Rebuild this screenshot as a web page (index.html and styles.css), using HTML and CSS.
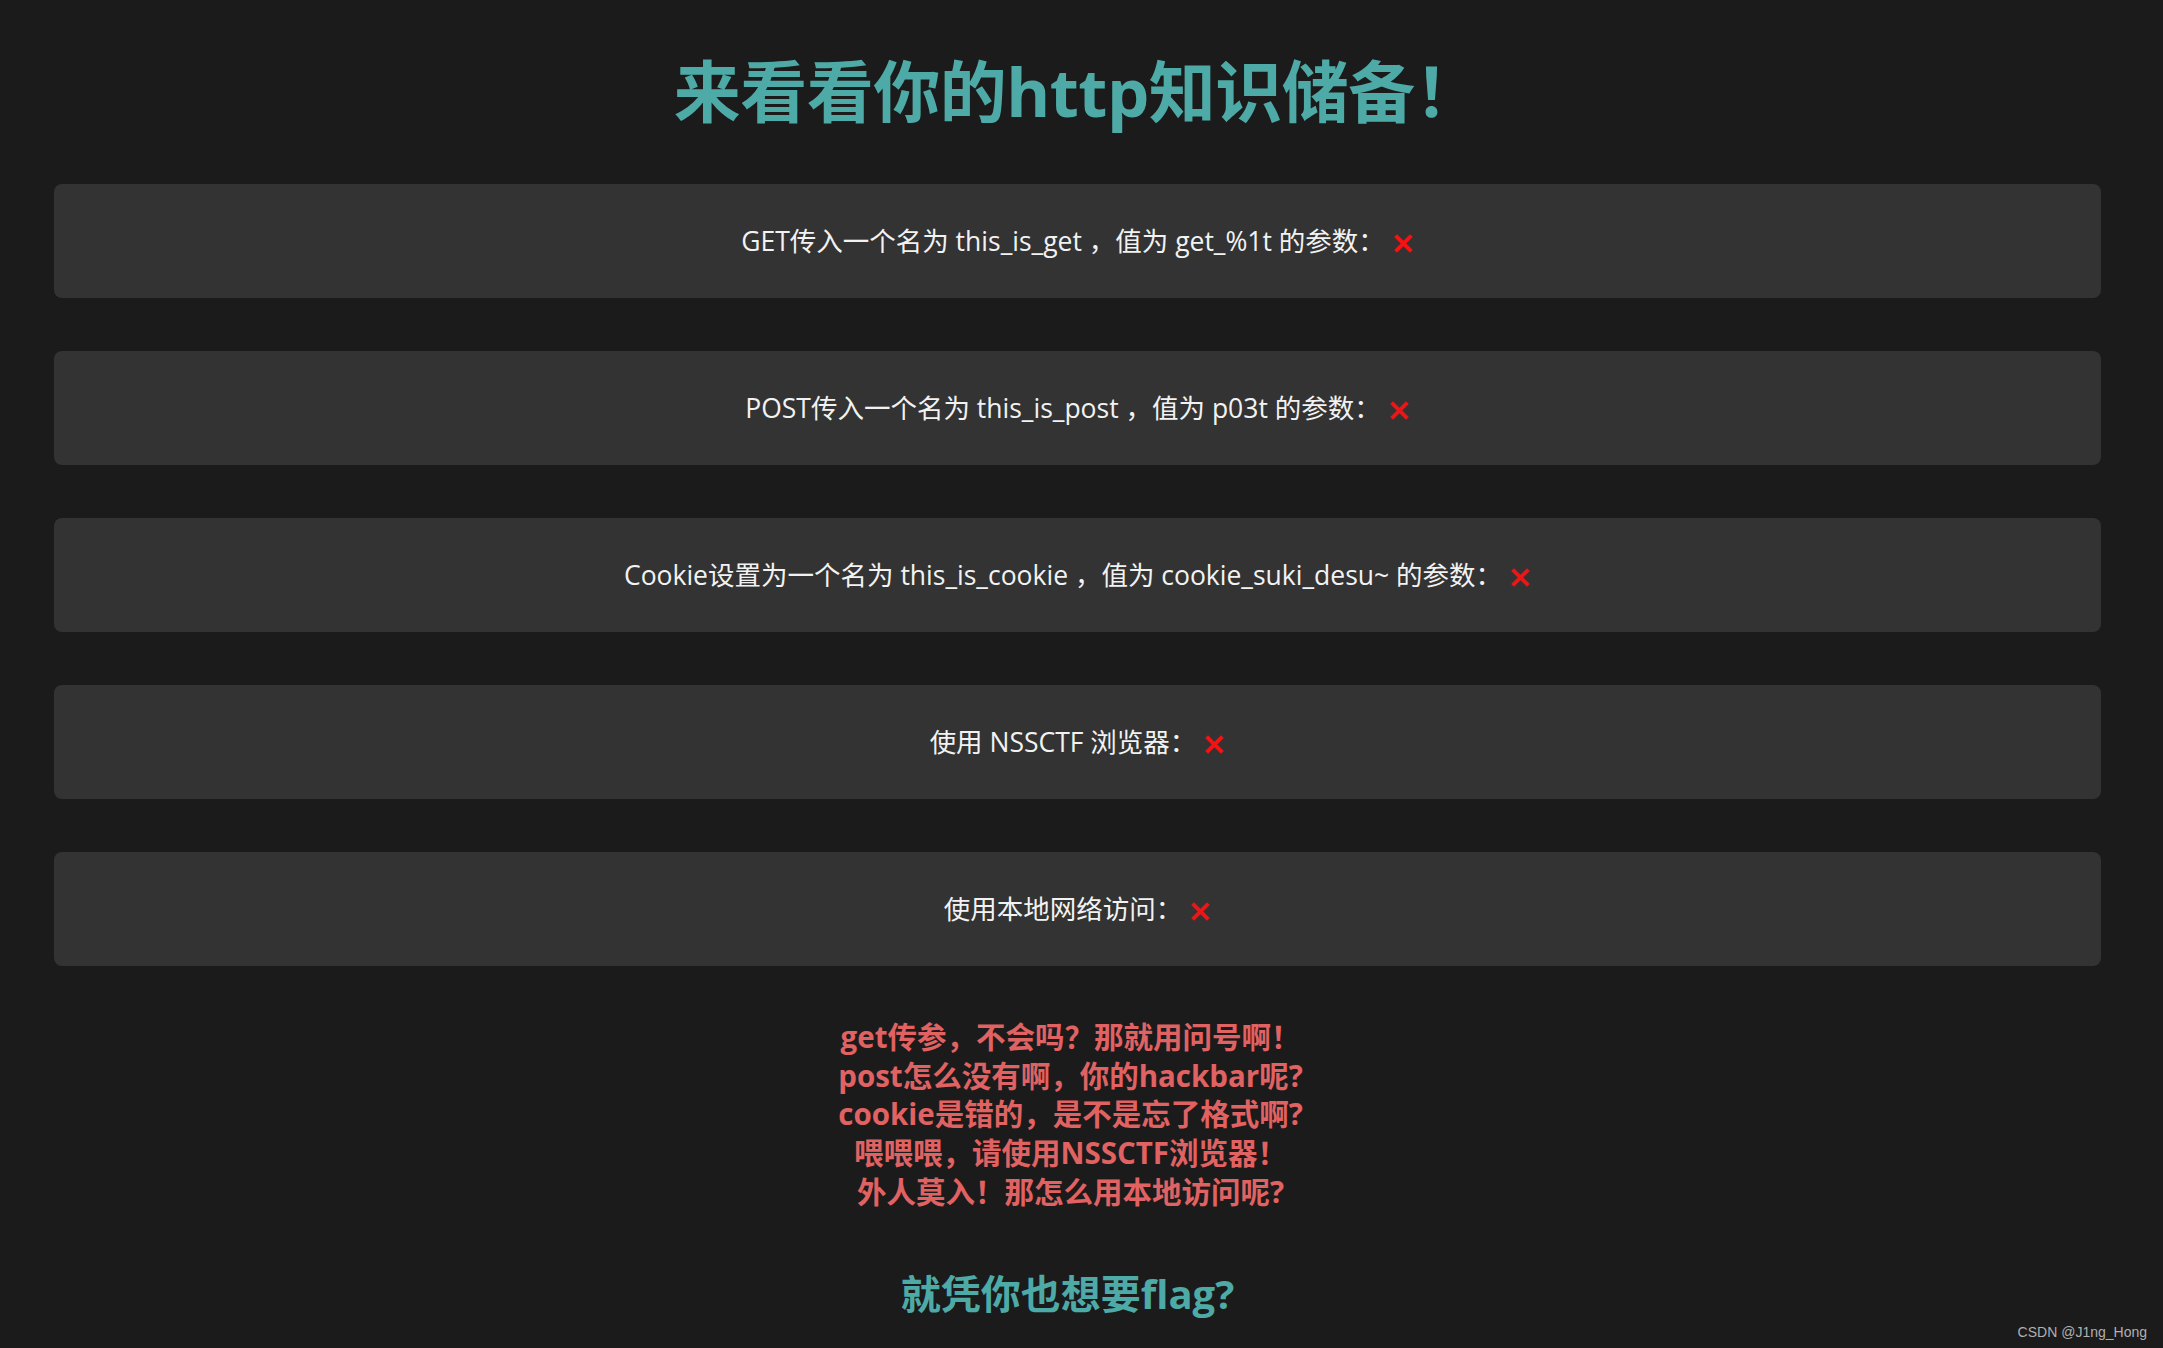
FILE: index.html
```html
<!DOCTYPE html>
<html lang="zh-CN">
<head>
  <meta charset="UTF-8" />
  <title>来看看你的http知识储备！</title>
  <link rel="stylesheet" href="styles.css">
</head>
<body>
  <div class="page">
    <h1>来看看你的http知识储备！</h1>

    <div class="checks">
      <div class="check">GET传入一个名为 this_is_get ，值为 get_%1t 的参数：<span class="bad"><svg viewBox="0 0 16 16"><path d="M2 2 L14 14 M14 2 L2 14" /></svg></span></div>
      <div class="check">POST传入一个名为 this_is_post ，值为 p03t 的参数：<span class="bad"><svg viewBox="0 0 16 16"><path d="M2 2 L14 14 M14 2 L2 14" /></svg></span></div>
      <div class="check">Cookie设置为一个名为 this_is_cookie ，值为 cookie_suki_desu~ 的参数：<span class="bad"><svg viewBox="0 0 16 16"><path d="M2 2 L14 14 M14 2 L2 14" /></svg></span></div>
      <div class="check">使用 NSSCTF 浏览器：<span class="bad"><svg viewBox="0 0 16 16"><path d="M2 2 L14 14 M14 2 L2 14" /></svg></span></div>
      <div class="check">使用本地网络访问：<span class="bad"><svg viewBox="0 0 16 16"><path d="M2 2 L14 14 M14 2 L2 14" /></svg></span></div>
    </div>

    <div class="hints">
      <p>get传参，不会吗？那就用问号啊！</p>
      <p>post怎么没有啊，你的hackbar呢?</p>
      <p>cookie是错的，是不是忘了格式啊?</p>
      <p>喂喂喂，请使用NSSCTF浏览器！</p>
      <p>外人莫入！那怎么用本地访问呢?</p>
    </div>

    <h2>就凭你也想要flag?</h2>
  </div>
  <div class="mark">CSDN @J1ng_Hong</div>
</body>
</html>
```

FILE: styles.css
```css
html, body {
  margin: 0;
  height: 100%;
}
body {
  background-color: #1b1b1b;
  font-family: "Open Sans", "Noto Sans CJK SC", sans-serif;
  color: #f2f2f2;
  overflow: hidden;
}
.page {
  display: flex;
  flex-direction: column;
  align-items: center;
  padding: 52px 62px 0 54px;
}
h1 {
  margin: 0;
  font-size: 67px;
  line-height: 79px;
  font-weight: bold;
  color: #4eaaa6;
  letter-spacing: -0.5px;
}
.checks {
  align-self: stretch;
  display: flex;
  flex-direction: column;
  gap: 53px;
  margin-top: 53px;
}
.check {
  background-color: #333333;
  border-radius: 8px;
  padding: 38px 20px;
  line-height: 38px;
  font-size: 26.5px;
  text-align: center;
}
.bad {
  display: inline-block;
  width: 21px;
  height: 21px;
  margin-left: 8px;
  vertical-align: -3px;
}
.bad svg {
  display: block;
  width: 21px;
  height: 21px;
  stroke: #f01414;
  stroke-width: 3;
  stroke-linecap: butt;
  fill: none;
}
.hints {
  margin-top: 52px;
  padding-right: 14px;
  text-align: center;
  color: #e06262;
  font-weight: bold;
  font-size: 29.5px;
}
.hints p {
  margin: 0;
  line-height: 38.7px;
}
h2 {
  margin: 58px 0 0;
  padding-right: 20px;
  font-size: 40px;
  line-height: 48px;
  font-weight: bold;
  color: #4eaaa6;
}
.mark {
  position: absolute;
  right: 16px;
  bottom: 8px;
  font-family: "Liberation Sans", sans-serif;
  font-size: 14px;
  color: #b0b0b0;
}
```
